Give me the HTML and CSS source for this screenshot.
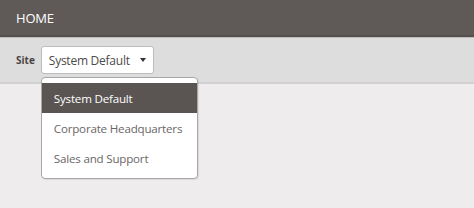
FILE: index.html
```html
<!DOCTYPE html>
<html>
<head>
<meta charset="utf-8">
<link rel="stylesheet" href="styles.css">
</head>
<body>
<header class="topbar"><span class="title">HOME</span></header>
<div class="toolbar">
  <span class="label">Site</span>
  <div class="select-wrap">
    <div class="select">
      <span class="select-text">System Default</span>
      <span class="caret"></span>
    </div>
    <ul class="menu">
      <li class="item active">System Default</li>
      <li class="item">Corporate Headquarters</li>
      <li class="item">Sales and Support</li>
    </ul>
  </div>
</div>
<main class="content"></main>
</body>
</html>
```
FILE: styles.css
```css
html, body {
  margin: 0;
  padding: 0;
  height: 100%;
}
body {
  font-family: "Open Sans", "Noto Sans", sans-serif;
  background: #eeeced;
  color: #555;
  display: flex;
  flex-direction: column;
}
.topbar {
  height: 35px;
  background: #5f5a58;
  border-bottom: 2px solid #55504e;
  box-shadow: 0 1px 0 #bdbaba;
  display: flex;
  align-items: center;
  padding-left: 16px;
  box-sizing: content-box;
}
.title {
  color: #ffffff;
  font-size: 13px;
  letter-spacing: -0.2px;
}
.toolbar {
  margin-top: 1px;
  height: 44px;
  background: #dddddd;
  border-bottom: 2px solid #d2d0d0;
  display: flex;
  align-items: center;
  padding-left: 16px;
}
.label {
  font-size: 10px;
  font-weight: 700;
  color: #4a4646;
  margin-right: 6px;
}
.select-wrap {
  position: relative;
}
.select {
  height: 26px;
  background: #fff;
  border: 1px solid #bcbcbc;
  border-radius: 3px;
  display: flex;
  align-items: center;
  padding-left: 7px;
  box-sizing: content-box;
  width: 104px;
}
.select-text {
  font-size: 12px;
  color: #4d4a4a;
  letter-spacing: -0.25px;
  flex: 1;
}
.caret {
  width: 0;
  height: 0;
  border-left: 3.5px solid transparent;
  border-right: 3.5px solid transparent;
  border-top: 4px solid #333;
  margin-right: 7px;
}
.menu {
  position: absolute;
  left: 0;
  top: 31px;
  width: 155px;
  margin: 0;
  padding: 5px 0 5px;
  list-style: none;
  background: #fff;
  border: 1px solid #a8a6a6;
  border-radius: 4px;
  box-shadow: 1px 1px 1px rgba(0,0,0,0.08);
}
.item {
  height: 30px;
  display: flex;
  align-items: center;
  padding-left: 12px;
  font-size: 11.6px;
  color: #6a6666;
  letter-spacing: -0.2px;
}
.item.active {
  background: #5a5553;
  color: #fff;
}
.content {
  flex: 1;
}
```
